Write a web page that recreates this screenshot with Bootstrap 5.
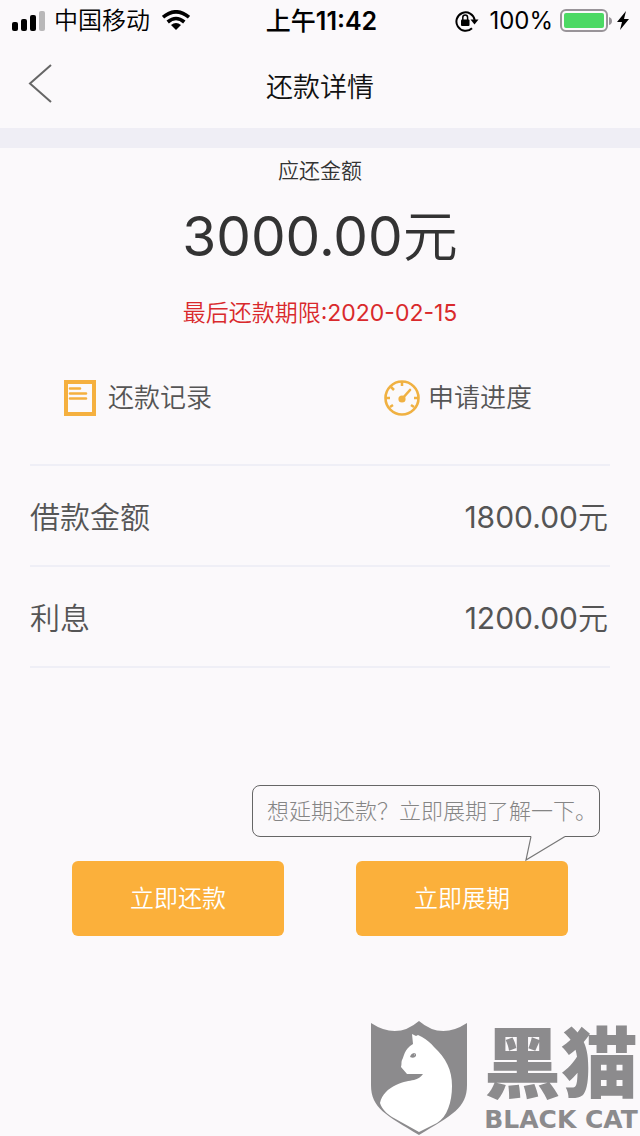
<!DOCTYPE html>
<html lang="zh-CN">
<head>
<meta charset="utf-8">
<meta name="viewport" content="width=device-width, initial-scale=1">
<title>还款详情</title>
<link href="https://cdn.jsdelivr.net/npm/bootstrap@5.3.0/dist/css/bootstrap.min.css" rel="stylesheet">
<style>
  body { background: #fbf9fb; color: #555; font-family: Inter, "Noto Sans CJK SC", sans-serif; font-size: 30px; line-height: 40px; font-weight: 350; }
  svg { display: block; flex: none; }
  .status-line { display: grid; grid-template-columns: 1fr auto 1fr; height: 40px; padding: 2px 9px 0 12px; color: #000; font-size: 24px; line-height: 36px; }
  .status-time { font-size: 25px; font-weight: 500; }
  .battery-text { margin: 0 6px 0 10px; }
  .page-head { display: grid; grid-template-columns: 1fr auto 1fr; height: 88px; padding: 0 28px; color: #111; }
  .page-head h1 { font-size: 27px; font-weight: 350; line-height: 40px; }
  .band { height: 20px; background: #efeef5; }
  .caption-text { font-size: 21px; line-height: 30px; color: #333; padding-top: 8px; }
  .amount { font-size: 55px; line-height: 80px; color: #333; margin-top: 10px; }
  .deadline { font-size: 23px; line-height: 30px; color: #d9292c; margin-top: 22px; }
  .shortcuts { margin: 50px 0 46px; }
  .shortcuts a { color: #555; font-size: 26px; padding-left: 64px; }
  .details { margin: 0 30px; border-top: 2px solid #efeff6; }
  .details > div { height: 101px; padding: 2px 2px 0 0; border-bottom: 2px solid #efeff6; }
  .details dt, .details dd { margin: 0; font-weight: 350; }
  .bubble { margin: 117px 40px 24px auto; height: 52px; padding: 0 2px 0 14px; border: 1px solid #666; border-radius: 8px; font-size: 22px; font-weight: 300; color: #858585; }
  .bubble svg { right: 32px; top: 49px; }
  .actions { padding: 0 72px; gap: 72px; }
  .action-btn { flex: 1 1 0; height: 75px; border-radius: 6px; font-size: 24px; font-weight: 350; color: #fff; background: #fbb03b; }
  .action-btn:hover { background: #f0a32c; color: #fff; }
  .brand { color: #8c8b8d; padding-right: 2px; }
  .brand-cn { font-size: 77px; line-height: 80px; font-weight: 900; }
  .brand-en { font-family: "DejaVu Sans", sans-serif; font-size: 25px; line-height: 32px; font-weight: 700; }
</style>
</head>
<body>
<div class="min-vh-100 d-flex flex-column">
  <div class="status-line align-items-center">
    <div class="d-flex align-items-center">
      <svg width="34" height="22" viewBox="0 0 34 22"><rect x="0" y="12" width="6" height="9" rx="2"/><rect x="9" y="9" width="6" height="12" rx="2"/><rect x="18" y="5" width="6" height="16" rx="2"/><rect x="27" y="1" width="6" height="20" rx="2" fill="#b9b8b9"/></svg>
      <span class="ms-2">中国移动</span>
      <svg class="ms-2 ps-1" width="32" height="22" viewBox="0 0 28 22" fill="none" stroke="#000" stroke-width="3.6"><path d="M1 7.200Q14-3.600 27 7.200M5.700 12Q14 5 22.300 12"/><path d="M14 20l-5-5q5-4 10 0z" fill="#000" stroke="none"/></svg>
    </div>
    <div class="status-time">上午<span class="fw-semibold">11:42</span></div>
    <div class="d-flex align-items-center justify-content-end">
      <svg width="24" height="22" viewBox="0 0 24 22"><path d="M17 18.200A9.200 9.200 0 1 1 19.700 10" fill="none" stroke="#000" stroke-width="2"/><path d="M15.500 9.500h8l-4 5z"/><rect x="6" y="9.500" width="8.500" height="6.500" rx="1"/><path d="M7.800 10V7.500a2.400 2.400 0 0 1 4.800 0V10" fill="none" stroke="#000" stroke-width="1.500"/></svg>
      <span class="battery-text fw-normal">100%</span>
      <svg width="72" height="24" viewBox="0 0 72 24"><rect x="2" y="1" width="46" height="21" rx="5" fill="none" stroke="#999499" stroke-width="2"/><rect x="5" y="4" width="40" height="15" rx="2" fill="#4cd964"/><path d="M50 8q3 1 3 4t-3 4z" fill="#999499"/><path d="M67 2l-9 11h5l-2 8 9-11h-5z"/></svg>
    </div>
  </div>
  <header class="page-head align-items-center">
    <a href="#" aria-label="返回"><svg width="24" height="40" viewBox="0 0 24 40" fill="none" stroke="#666" stroke-width="2"><path d="M23 1L2 19.500L23 38"/></svg></a>
    <h1 class="m-0 pt-2">还款详情</h1>
  </header>
  <div class="band"></div>
  <main class="d-flex flex-column">
    <div class="caption-text text-center">应还金额</div>
    <div class="amount text-center"><span class="fw-normal">3000.00</span>元</div>
    <div class="deadline text-center">最后还款期限<span class="fw-normal">:2020-02-15</span></div>
    <nav class="shortcuts row g-0">
      <a href="#" class="col-6 d-flex align-items-center text-decoration-none">
        <svg width="32" height="36" viewBox="0 0 32 36" fill="none" stroke="#f5b03f"><rect x="2" y="2" width="28" height="32" stroke-width="4"/><path d="M6 8.500h10M6 13.500h16M6 18.500h16" stroke-width="2.600" stroke-linecap="round"/></svg>
        <span class="ms-2 ps-1">还款记录</span>
      </a>
      <a href="#" class="col-6 d-flex align-items-center text-decoration-none">
        <svg width="36" height="36" viewBox="0 0 36 36" fill="none" stroke="#f0b142" stroke-width="2.600"><circle cx="18" cy="18" r="16.500"/><path d="M18 2v4M2 18h4M30 18h4M7 7l3 3M6 27l3-2M30 27l-3-2" stroke-width="2.500"/><path d="M18 19L26 10" stroke-linecap="round"/><circle cx="18" cy="19" r="3.600" fill="#f0b142" stroke="none"/></svg>
        <span class="ms-2">申请进度</span>
      </a>
    </nav>
    <dl class="details">
      <div class="d-flex align-items-center justify-content-between"><dt>借款金额</dt><dd><span class="fw-normal">1800.00</span>元</dd></div>
      <div class="d-flex align-items-center justify-content-between"><dt>利息</dt><dd><span class="fw-normal">1200.00</span>元</dd></div>
    </dl>
    <div class="bubble position-relative d-flex align-items-center">想延期还款？立即展期了解一下。
      <svg class="position-absolute" width="42" height="27" viewBox="0 0 42 27"><path d="M6 0v2L1 25 40 2V0z" fill="#fbf9fb"/><path d="M6 1.500L1 25L40 1.500" fill="none" stroke="#777" stroke-width="1.200"/></svg>
    </div>
    <div class="actions d-flex">
      <button type="button" class="btn action-btn border-0">立即还款</button>
      <button type="button" class="btn action-btn border-0">立即展期</button>
    </div>
  </main>
  <footer class="brand mt-auto d-flex align-items-end justify-content-end">
    <svg class="me-3" width="98" height="116" viewBox="0 0 98 116"><path d="M1 3Q27 20 49 1Q71 20 97 3V65C97 88 82 95 49 115C16 95 1 88 1 65Z" fill="#8c8b8d"/><path d="M42 14L46 16L48 15L52 17C57 20 61 23 64 27C76 38 82 50 82 66C82 82 77 97 67 103L49 112L22 97C16 93 12 89 10 83C12 74 18 69 26 65C34 61 39 61 44 60C48 59 51 57 53 54H37L31 47C32 43 31 43 32 40C34 37 34 29 43 24Z" fill="#fff"/><path d="M40 37q1-4 5-4l-1 3 2-3 0 3q-2 3-6 1z" fill="#8c8b8d"/></svg>
    <div class="text-center">
      <div class="brand-cn">黑猫</div>
      <div class="brand-en">BLACK CAT</div>
    </div>
  </footer>
</div>
<script src="https://cdn.jsdelivr.net/npm/bootstrap@5.3.0/dist/js/bootstrap.bundle.min.js"></script>
</body>
</html>
